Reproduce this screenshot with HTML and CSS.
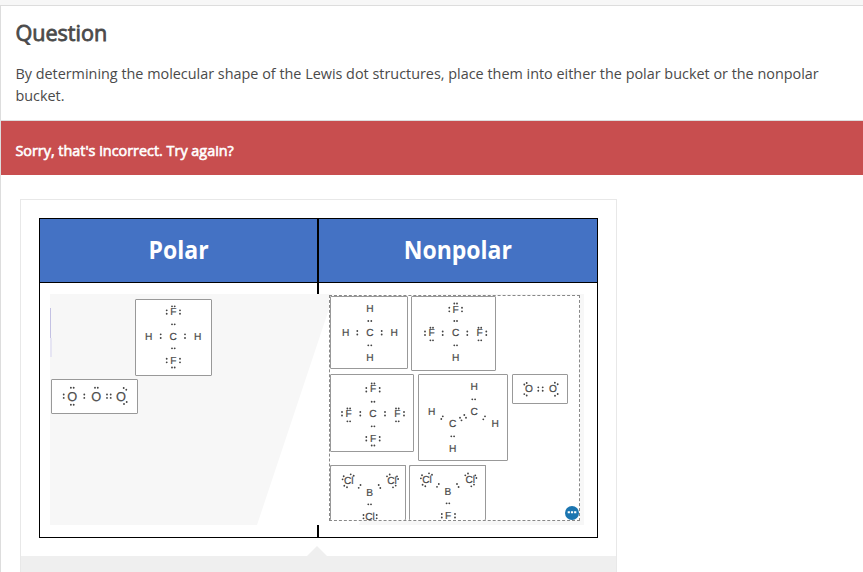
FILE: index.html
```html
<!DOCTYPE html>
<html lang="en">
<head>
<meta charset="utf-8">
<title>Question</title>
<link rel="stylesheet" href="styles.css">
</head>
<body>
<main class="panel">
  <section class="question">
    <h1>Question</h1>
    <p>By determining the molecular shape of the Lewis dot structures, place them into either the polar bucket or the nonpolar bucket.</p>
  </section>
  <div class="alert" role="alert">Sorry, that's incorrect. Try again?</div>
  <section class="activity">
    <div class="sorter">
      <div class="headings">
        <h2><span>Polar</span></h2>
        <h2><span>Nonpolar</span></h2>
      </div>
      <div class="buckets">
        <div class="stage">
          <svg class="backdrop" viewBox="50 294 534 231" width="534" height="231">
            <path fill="#fff" d="M50 294h534v231H50z"/>
            <path fill="#f7f7f7" d="M50 294H334L257 525H50z"/>
            <path fill="#f7f7f7" d="M436 294H584V525H359z"/>
            <path fill="#c3c1e3" d="M50 308h1v30h-1z"/>
            <path fill="#e6e5f3" d="M50 338h2v19h-2z"/>
          </svg>
          <div class="dropzone"></div>

          <svg class="card ch2f2" viewBox="135 299 77 77">
            <g class="atoms"><text x="173.3" y="315">F</text><text x="148.7" y="339.5">H</text><text x="173.3" y="339.5">C</text><text x="197.7" y="339.5">H</text><text x="173.3" y="364">F</text></g>
            <path class="dots" d="M166.7 310.3h0M166.7 313.7h0M180 310.3h0M180 313.7h0M172 306.3h0M174.7 306.3h0M172 324.3h0M174.7 324.3h0M160.7 334.3h0M160.7 338h0M185 334.3h0M185 338h0M172 348.3h0M174.7 348.3h0M166.7 358.7h0M166.7 362.3h0M180 358.7h0M180 362.3h0M172 367.5h0M174.7 367.5h0"/>
          </svg>

          <svg class="card o3" viewBox="51 379 87 35">
            <g class="atoms large"><text x="72.3" y="400.5">O</text><text x="96.2" y="400.5">O</text><text x="121" y="400.5">O</text></g>
            <path class="dots" d="M63.7 394.5h0M63.7 397.9h0M70.9 387.7h0M73.7 387.7h0M70.9 404.7h0M73.7 404.7h0M84.3 394.5h0M84.3 397.9h0M95 387.7h0M97.8 387.7h0M107 394.5h0M107 397.9h0M110.7 394.5h0M110.7 397.9h0M123.7 388h0M126.3 389.7h0M124 404h0M126.7 402h0"/>
          </svg>

          <svg class="card ch4" viewBox="330 296 78 73">
            <g class="atoms"><text x="370" y="312">H</text><text x="345.7" y="336">H</text><text x="370" y="336">C</text><text x="394.3" y="336">H</text><text x="370" y="360.5">H</text></g>
            <path class="dots" d="M368.3 321h0M371.3 321h0M357.3 331h0M357.3 334.5h0M381.7 331h0M381.7 334.5h0M368.3 345.3h0M371.3 345.3h0"/>
          </svg>

          <svg class="card chf3" viewBox="411 296 85 75">
            <g class="atoms"><text x="455.7" y="312.5">F</text><text x="431.7" y="336">F</text><text x="455.7" y="336">C</text><text x="479.7" y="336">F</text><text x="455.7" y="360.5">H</text></g>
            <path class="dots" d="M449.3 307.7h0M449.3 311.3h0M462 307.7h0M462 311.3h0M454.3 303.5h0M457 303.5h0M454.3 321h0M457 321h0M425 331.5h0M425 335h0M430.4 327.7h0M433 327.7h0M430.4 340.3h0M433 340.3h0M442.7 331.5h0M442.7 335h0M467.3 331.5h0M467.3 335h0M478.5 327.7h0M481.2 327.7h0M478.5 340.3h0M481.2 340.3h0M486.3 331.5h0M486.3 335h0M454.3 345.3h0M457 345.3h0"/>
          </svg>

          <svg class="card cf4" viewBox="330 374 84 78">
            <g class="atoms"><text x="373" y="392.3">F</text><text x="348.7" y="417">F</text><text x="373" y="417">C</text><text x="397.3" y="417">F</text><text x="373" y="441.5">F</text></g>
            <path class="dots" d="M366.3 388h0M366.3 391.5h0M379.7 388h0M379.7 391.5h0M371.7 383.5h0M374.4 383.5h0M371.7 401.7h0M374.4 401.7h0M342 412h0M342 415.5h0M347.4 408.5h0M350.1 408.5h0M347.4 421.3h0M350.1 421.3h0M360.3 412h0M360.3 415.5h0M385 412h0M385 415.5h0M396 408.5h0M398.7 408.5h0M396 421.3h0M398.7 421.3h0M404 412h0M404 415.5h0M371.7 426.3h0M374.4 426.3h0M366.3 437h0M366.3 440.5h0M379.7 437h0M379.7 440.5h0M371.7 445.5h0M374.4 445.5h0"/>
          </svg>

          <svg class="card c2h4" viewBox="418 374 90 87">
            <g class="atoms"><text x="474.3" y="390.3">H</text><text x="474.3" y="414.5">C</text><text x="431.7" y="414.5">H</text><text x="452.7" y="427">C</text><text x="495.3" y="427">H</text><text x="452.7" y="451.7">H</text></g>
            <path class="dots" d="M472.3 399.3h0M475.1 399.3h0M441.3 419h0M442.8 416.3h0M460 417.7h0M461.5 420.3h0M464.3 415h0M466 417.7h0M451.3 436.3h0M454.1 436.3h0M483.3 419.3h0M485 416.3h0"/>
          </svg>

          <svg class="card o2" viewBox="512 374 56 30">
            <g class="atoms"><text x="529" y="392.3">O</text><text x="553" y="392.3">O</text></g>
            <path class="dots" d="M524.3 384.5h0M526.7 383h0M524.3 394.1h0M526.7 395.5h0M538.3 387.3h0M538.3 390.7h0M542.7 387.3h0M542.7 390.7h0M554.9 382.7h0M557.7 384.2h0M555 395.7h0M557.7 394h0"/>
          </svg>

          <svg class="card bcl3" viewBox="330 465 76 55">
            <g class="atoms"><text x="348.7" y="483.7">Cl</text><text x="392" y="483.7">Cl</text><text x="369.7" y="495.5">B</text><text x="370" y="519.6">Cl</text></g>
            <path class="dots" d="M343.7 476.2h0M342.6 479.3h0M350.7 474.3h0M353.7 475.7h0M344.3 485.7h0M347 487.2h0M358.7 487.8h0M360.5 485h0M378.7 485h0M380.3 488h0M387 476.3h0M389.7 474.5h0M397 476.3h0M398.1 479h0M393 487.3h0M395.7 485.6h0M368.3 504.3h0M371 504.3h0M363.5 515h0M363.5 518.3h0M376.7 515h0M376.7 518.3h0"/>
          </svg>

          <svg class="card bcl2f" viewBox="409 465 77 55">
            <g class="atoms"><text x="427" y="482.7">Cl</text><text x="470.3" y="482.7">Cl</text><text x="448" y="494.5">B</text><text x="448" y="518.8">F</text></g>
            <path class="dots" d="M422 475.2h0M420.9 478.3h0M429 473.3h0M432 474.7h0M422.6 484.7h0M425.3 486.2h0M437 486.8h0M438.8 484h0M457 484h0M458.6 487h0M465.3 475.3h0M468 473.5h0M475.3 475.3h0M476.4 478h0M471.3 486.3h0M474 484.6h0M446.6 503.3h0M449.3 503.3h0M441.8 514h0M441.8 517.5h0M455 514h0M455 517.5h0"/>
          </svg>

          <svg class="more" viewBox="0 0 14 14" width="14" height="14" aria-label="More">
            <circle cx="7" cy="7" r="7" fill="#1b75b0"/>
            <path fill="#fff" d="M2.7 5.3h2.2v2H2.7zM5.9 5.3h2.2v2H5.9zM9.1 5.3h2.2v2H9.1z"/>
          </svg>
        </div>
      </div>
    </div>
    <div class="controls"></div>
  </section>
</main>
</body>
</html>
```

FILE: styles.css
```css
* { box-sizing: border-box; }

body {
  margin: 0;
  padding-top: 5px;
  height: 572px;
  overflow: hidden;
  background: #f7f7f7;
  color: #4a4a4a;
  font-family: "Open Sans", sans-serif;
}

.panel {
  height: 567px;
  border-top: 1px solid #ddd;
  border-left: 1px solid #ddd;
  background: #fff;
}

.question {
  height: 115px;
  padding: 11px 30px 0 14.4px;
  border-bottom: 1px solid #ddd;
}

h1 {
  margin: 0;
  font-size: 21.6px;
  line-height: 32px;
  font-weight: 400;
  -webkit-text-stroke: 0.8px currentColor;
}

.question p {
  margin: 14px 0 0;
  font-size: 14.4px;
  line-height: 22px;
}

.alert {
  height: 54px;
  padding-left: 14.4px;
  background: #c84e4f;
  color: #fff;
  font-size: 14.4px;
  line-height: 60px;
  -webkit-text-stroke: 0.6px currentColor;
}

.activity {
  width: 597px;
  height: 373px;
  margin: 24px 0 0 19px;
  padding: 18px 18px 0;
  border: 1px solid #e8e8e8;
  border-bottom: 0;
}

.sorter {
  width: 559px;
  height: 320px;
  border: 1px solid #000;
}

.headings {
  display: grid;
  grid-template-columns: 279px 278px;
  height: 64px;
  border-bottom: 1px solid #000;
  background: #4472c4;
}

.headings h2 {
  margin: 0;
  color: #fff;
  font-size: 25px;
  line-height: 61px;
  text-align: center;
}

.headings h2:first-child { border-right: 2px solid #000; }

.headings span {
  display: inline-block;
  transform: scaleX(0.92);
}

.buckets {
  height: 254px;
  padding: 11px 0 0 10px;
  background: linear-gradient(#000, #000) 277px 0 / 2px 100% no-repeat;
}

.stage {
  position: relative;
  width: 534px;
  height: 231px;
}

.backdrop { display: block; }

.dropzone {
  position: absolute;
  left: 279px;
  top: 1px;
  width: 251px;
  height: 226px;
  border: 1px dashed #888;
  background: #fff;
}

.card {
  position: absolute;
  overflow: visible;
  background: #fff;
  outline: 1px solid #999;
  outline-offset: -1px;
  border-radius: 1px;
}

.atoms {
  fill: #4c4c4c;
  stroke: #4c4c4c;
  stroke-width: 0.2;
  font: 10.2px "Liberation Sans", sans-serif;
  text-anchor: middle;
  text-rendering: geometricPrecision;
}

.atoms.large { font-size: 12.8px; }

.dots {
  fill: none;
  stroke: #444;
  stroke-width: 1.85;
  stroke-linecap: round;
}

.ch2f2 { left: 85px; top: 5px; width: 77px; height: 77px; }
.o3 { left: 1px; top: 85px; width: 87px; height: 35px; }
.ch4 { left: 280px; top: 2px; width: 78px; height: 73px; }
.chf3 { left: 361px; top: 2px; width: 85px; height: 75px; }
.cf4 { left: 280px; top: 80px; width: 84px; height: 78px; }
.c2h4 { left: 368px; top: 80px; width: 90px; height: 87px; }
.o2 { left: 462px; top: 80px; width: 56px; height: 30px; }
.bcl3 { left: 280px; top: 171px; width: 76px; height: 55px; }
.bcl2f { left: 359px; top: 171px; width: 77px; height: 55px; }

.bcl3,
.bcl2f {
  outline: 0;
  box-shadow: inset 1px 1px #999, inset -1px 0 #999;
}

.more { position: absolute; left: 515px; top: 212px; }

.controls {
  position: relative;
  height: 16px;
  margin: 18px -18px 0;
  background: #efefef;
}

.controls::before {
  content: "";
  position: absolute;
  left: 286px;
  bottom: 100%;
  border: 10px solid transparent;
  border-top: 0;
  border-bottom-color: #efefef;
}
```
